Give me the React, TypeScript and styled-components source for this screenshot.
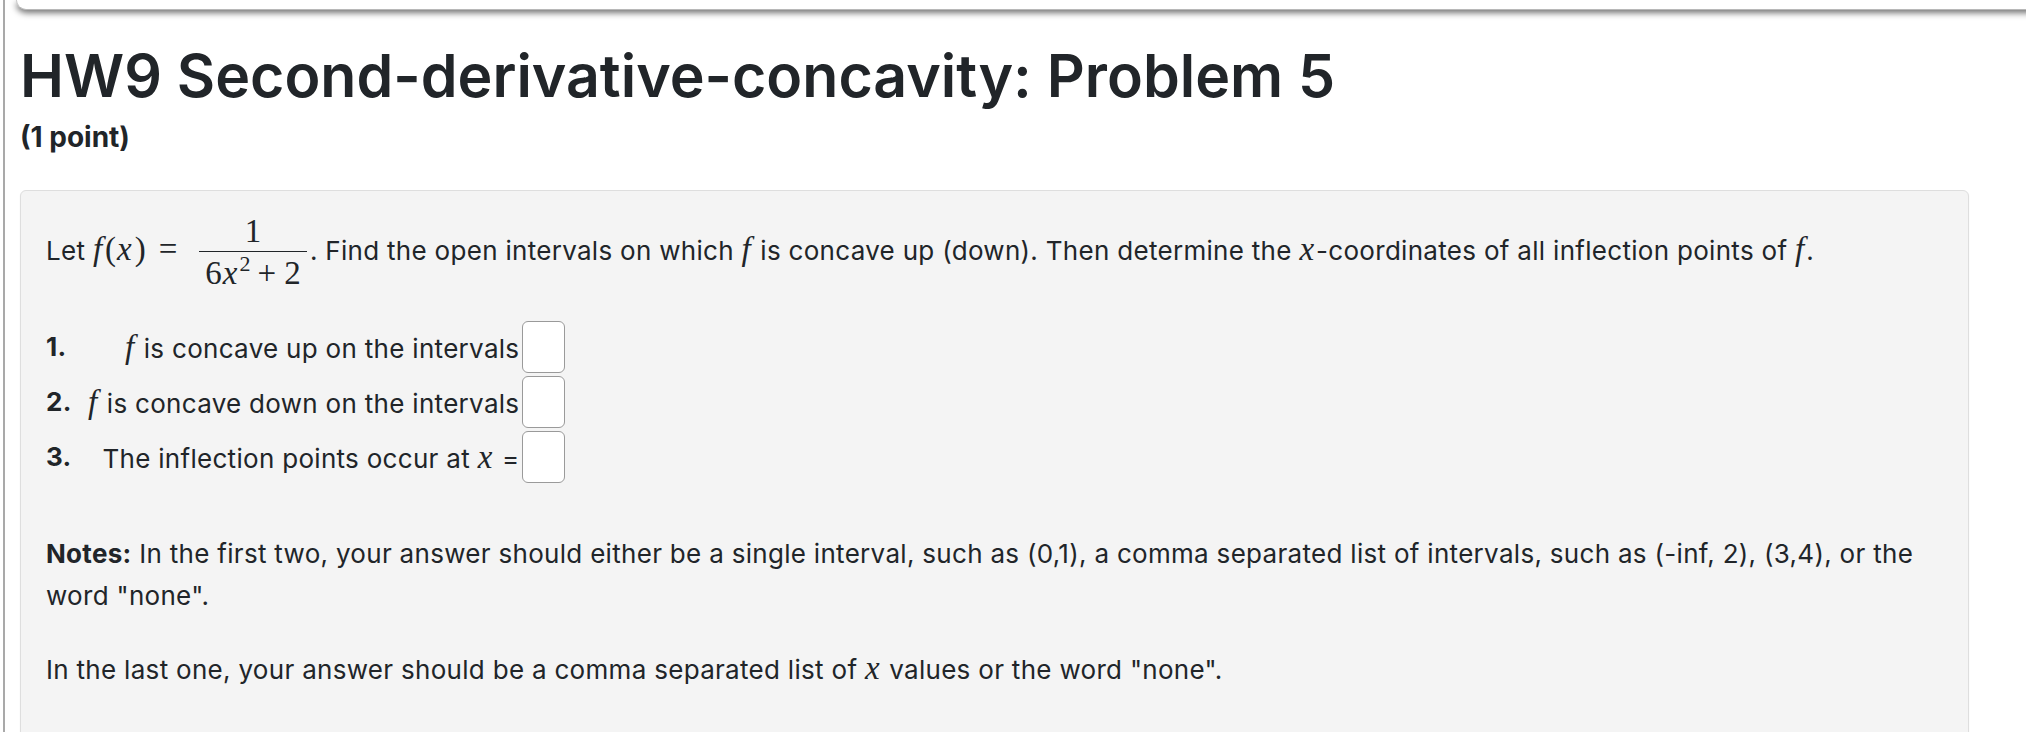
import React from 'react';
import styled, { createGlobalStyle } from 'styled-components';

const GlobalStyle = createGlobalStyle`
  html, body {
    margin: 0;
    padding: 0;
    background: #ffffff;
  }
  body {
    font-family: Inter, "Liberation Sans", sans-serif;
    color: #212529;
  }
`;

const Page = styled.div`
  height: 732px;
  overflow: hidden;
  margin-left: 3px;
  border-left: 2px solid #a9a9a9;
  padding-left: 15px;
`;

const TopBar = styled.div`
  height: 9px;
  margin-left: -4px;
  margin-right: -10px;
  background: #ffffff;
  border-left: 1px solid #c8c8c8;
  border-bottom: 1px solid #b8b8b8;
  border-bottom-left-radius: 10px;
  box-shadow: 0 3px 6px rgba(0, 0, 0, 0.55);
`;

const Title = styled.h2`
  margin: 31px 0 0;
  font-size: 59px;
  font-weight: 600;
  line-height: 1.2;
`;

const Points = styled.div`
  margin-top: 9px;
  font-size: 28px;
  font-weight: 700;
  line-height: 1.2;
`;

const ProblemBox = styled.div`
  margin: 36px 57px 0 0;
  padding: 22px 25px 80px;
  background: #f4f4f4;
  border: 1px solid #dedede;
  border-radius: 6px;
  box-shadow: 0 1px 2px rgba(0, 0, 0, 0.06);
  font-size: 26px;
  letter-spacing: 0.3px;
  line-height: 42px;
`;

const Para = styled.p<{ $gap?: number }>`
  margin: ${(p) => p.$gap ?? 0}px 0 0;
`;

const Mi = styled.span`
  font-family: "Liberation Serif", "DejaVu Serif", serif;
  font-style: italic;
  font-size: 33px;
  letter-spacing: 0;
  margin-right: 2px;
`;

const Mo = styled.span<{ $space?: boolean }>`
  font-family: "Liberation Serif", "DejaVu Serif", serif;
  font-size: 33px;
  letter-spacing: 0;
  ${(p) => (p.$space ? 'margin: 0 10px 0 12px;' : 'margin: 0 1px;')}
`;

const Frac = styled.span`
  display: inline-flex;
  flex-direction: column;
  align-items: stretch;
  vertical-align: 18px;
  margin: 0 3px 0 12px;
  font-family: "Liberation Serif", "DejaVu Serif", serif;
  font-size: 33px;
  letter-spacing: 0;
  line-height: 36px;
  text-align: center;
`;

const Num = styled.span`
  padding: 0 6px 2px;
`;

const Den = styled.span`
  padding: 3px 6px 0;
  border-top: 1.5px solid #212529;
`;

const FracVar = styled.i`
  font-style: italic;
  margin-left: 1px;
`;

const Sup = styled.sup`
  font-size: 22px;
  line-height: 0;
  vertical-align: 13px;
  margin: 0 7px 0 2px;
`;

const Items = styled.div`
  display: grid;
  grid-template-columns: 42px auto auto;
  justify-content: start;
  align-items: center;
  row-gap: 3px;
  margin-top: 30px;
  line-height: 1.3;
`;

const ItemNo = styled.span`
  font-weight: 700;
`;

const ItemLabel = styled.span`
  justify-self: end;
  text-align: right;
`;

const AnswerBox = styled.input`
  box-sizing: border-box;
  width: 43px;
  height: 52px;
  margin-left: 3px;
  padding: 0;
  background: #ffffff;
  border: 1.5px solid #9a9a9a;
  border-radius: 6px;
  outline: none;
`;

const Notes = styled.p`
  margin: 50px 0 0;
`;

const items: { no: string; label: React.ReactNode }[] = [
  {
    no: '1.',
    label: (
      <>
        <Mi>f</Mi> is concave up on the intervals
      </>
    ),
  },
  {
    no: '2.',
    label: (
      <>
        <Mi>f</Mi> is concave down on the intervals
      </>
    ),
  },
  {
    no: '3.',
    label: (
      <>
        The inflection points occur at <Mi>x</Mi> =
      </>
    ),
  },
];

function App() {
  return (
    <>
      <GlobalStyle />
      <Page>
        <TopBar />
        <Title>HW9 Second-derivative-concavity: Problem 5</Title>
        <Points>(1 point)</Points>
        <ProblemBox>
          <Para>
            Let <Mi>f</Mi>
            <Mo>(</Mo>
            <Mi>x</Mi>
            <Mo>)</Mo>
            <Mo $space>=</Mo>
            <Frac>
              <Num>1</Num>
              <Den>
                6<FracVar>x</FracVar>
                <Sup>2</Sup>+ 2
              </Den>
            </Frac>
            . Find the open intervals on which <Mi>f</Mi> is concave up (down). Then determine the{' '}
            <Mi>x</Mi>-coordinates of all inflection points of <Mi>f</Mi>.
          </Para>
          <Items>
            {items.map((item) => (
              <React.Fragment key={item.no}>
                <ItemNo>{item.no}</ItemNo>
                <ItemLabel>{item.label}</ItemLabel>
                <AnswerBox type="text" aria-label={`answer ${item.no}`} />
              </React.Fragment>
            ))}
          </Items>
          <Notes>
            <b>Notes:</b> In the first two, your answer should either be a single interval, such as
            (0,1), a comma separated list of intervals, such as (-inf, 2), (3,4), or the word "none".
          </Notes>
          <Para $gap={30}>
            In the last one, your answer should be a comma separated list of <Mi>x</Mi> values or the
            word "none".
          </Para>
        </ProblemBox>
      </Page>
    </>
  );
}

export default App;
